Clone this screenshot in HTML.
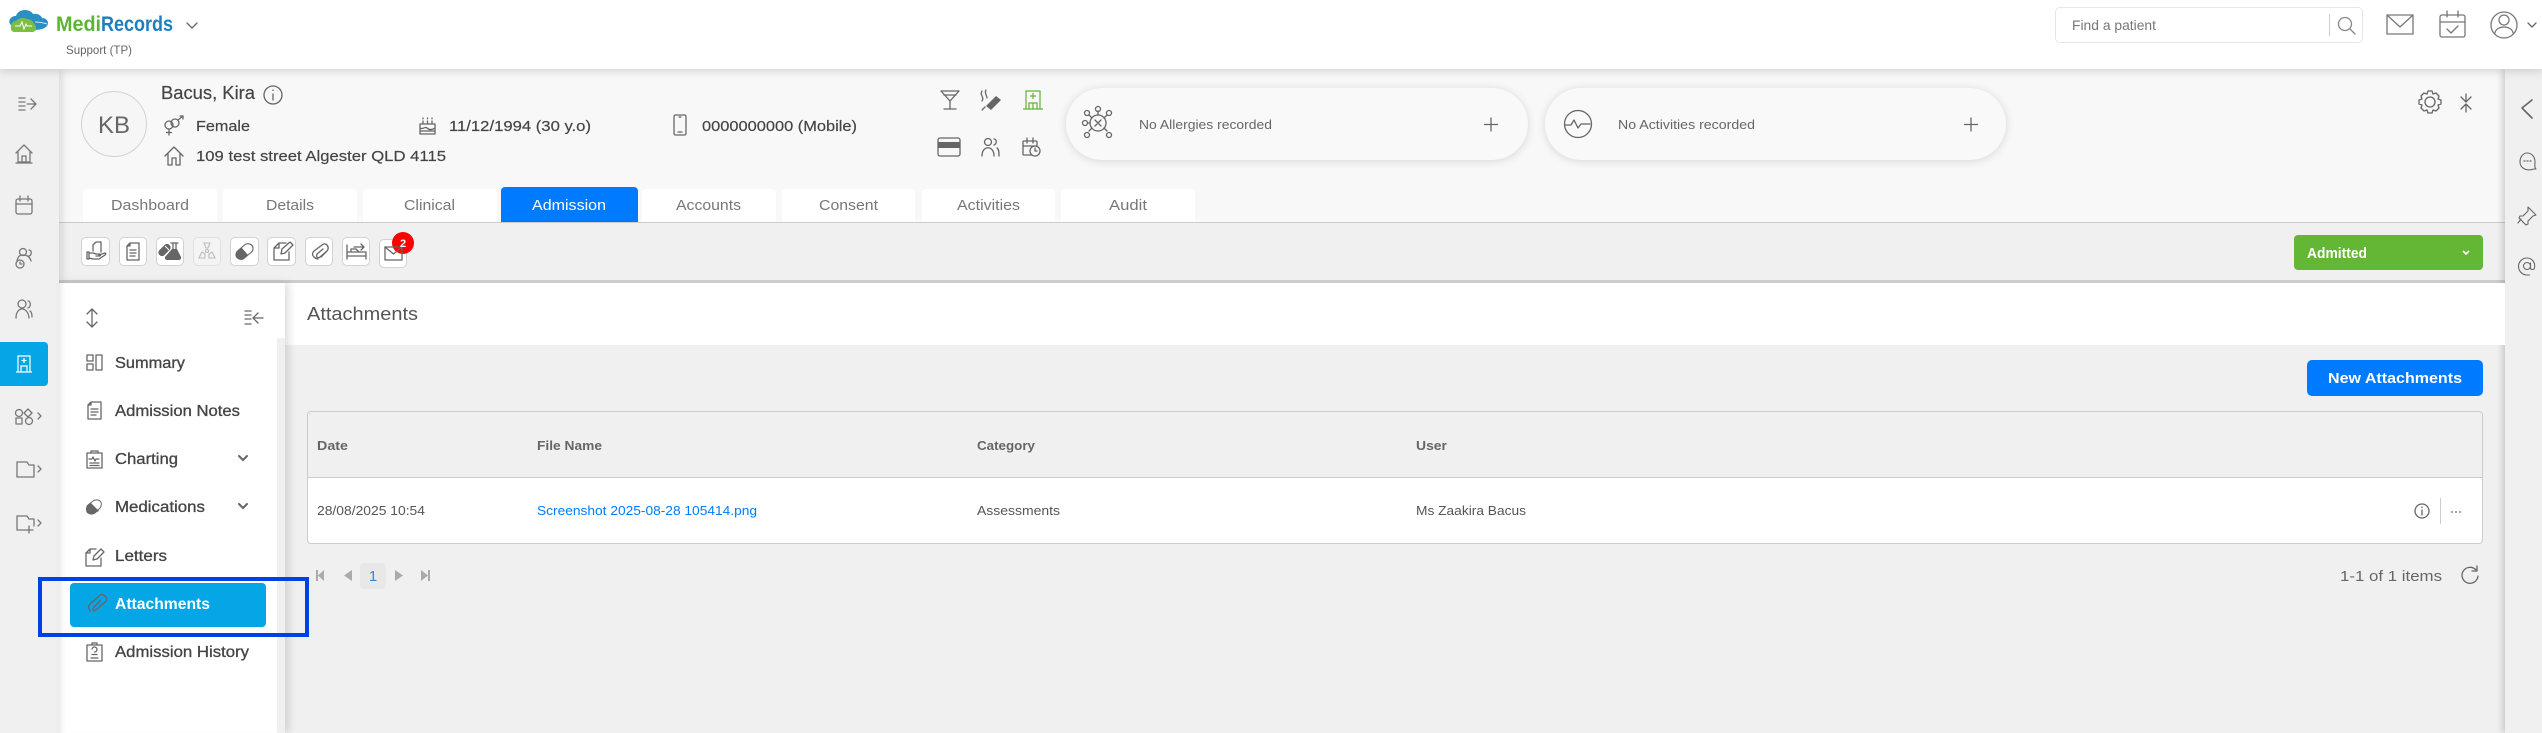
<!DOCTYPE html>
<html lang="en"><head><meta charset="utf-8"><title>MediRecords - Attachments</title>
<style>
html,body{margin:0;padding:0;background:#f0f0f0}
body{width:2542px;height:733px;position:relative;overflow:hidden;font-family:"Liberation Sans",sans-serif}
.b{position:absolute;box-sizing:border-box}
svg{position:absolute;left:0;top:0}
svg text{font-family:"Liberation Sans",sans-serif}
.i{fill:none;stroke:#666;stroke-width:1.3;stroke-linecap:round;stroke-linejoin:round}
.s{stroke:#444;stroke-width:.3px}
.t{stroke:#444;stroke-width:.18px}
</style></head><body>
<div class="b" style="left:59px;top:69px;width:2446px;height:154px;background:#f8f8f8"></div>
<div class="b" style="left:59px;top:222px;width:2446px;height:61px;background:#f0f0f0;border-top:1.5px solid #ccc;border-bottom:3px solid #ccc"></div>
<div class="b" style="left:0;top:69px;width:59px;height:664px;background:#f0f0f0;box-shadow:3px 0 8px rgba(0,0,0,.13)"></div>
<div class="b" style="left:2505px;top:69px;width:37px;height:664px;background:#f0f0f0;box-shadow:-3px 0 6px rgba(0,0,0,.16)"></div>
<div class="b" style="left:285px;top:283px;width:2220px;height:62px;background:#fff"></div>
<div class="b" style="left:59px;top:283px;width:226px;height:450px;background:#fff;box-shadow:4px 0 8px rgba(0,0,0,.13),inset 6px 0 6px -4px rgba(0,0,0,.10)"></div>
<div class="b" style="left:277px;top:338px;width:8px;height:395px;background:#f0f0f0"></div>
<div class="b" style="left:0;top:0;width:2542px;height:69px;background:#fff;box-shadow:0 2px 9px rgba(0,0,0,.16)"></div>
<div class="b" style="left:2055px;top:7px;width:308px;height:36px;background:#fff;border:1px solid #e6e6e6;border-radius:5px"></div>
<div class="b" style="left:81px;top:91px;width:66px;height:66px;border-radius:50%;background:#f6f6f6;border:1px solid #d2d2d2"></div>
<div class="b" style="left:83px;top:189px;width:134px;height:33px;background:#fff;border-radius:4px 4px 0 0"></div>
<div class="b" style="left:223px;top:189px;width:134px;height:33px;background:#fff;border-radius:4px 4px 0 0"></div>
<div class="b" style="left:363px;top:189px;width:134px;height:33px;background:#fff;border-radius:4px 4px 0 0"></div>
<div class="b" style="left:501px;top:187px;width:137px;height:35px;background:#007bff;border-radius:4px 4px 0 0"></div>
<div class="b" style="left:642px;top:189px;width:134px;height:33px;background:#fff;border-radius:4px 4px 0 0"></div>
<div class="b" style="left:782px;top:189px;width:133px;height:33px;background:#fff;border-radius:4px 4px 0 0"></div>
<div class="b" style="left:922px;top:189px;width:133px;height:33px;background:#fff;border-radius:4px 4px 0 0"></div>
<div class="b" style="left:1061px;top:189px;width:134px;height:33px;background:#fff;border-radius:4px 4px 0 0"></div>
<div class="b" style="left:1066px;top:88px;width:462px;height:72px;border-radius:36px;background:#f9f9f9;box-shadow:0 1px 9px rgba(0,0,0,.14)"></div>
<div class="b" style="left:1545px;top:88px;width:461px;height:72px;border-radius:36px;background:#f9f9f9;box-shadow:0 1px 9px rgba(0,0,0,.14)"></div>
<div class="b" style="left:81px;top:237px;width:29px;height:29px;background:#fff;border:1px solid #d2d2d2;border-radius:5px"></div>
<div class="b" style="left:119px;top:237px;width:28px;height:29px;background:#fff;border:1px solid #d2d2d2;border-radius:5px"></div>
<div class="b" style="left:156px;top:237px;width:28px;height:29px;background:#fff;border:1px solid #d2d2d2;border-radius:5px"></div>
<div class="b" style="left:193px;top:237px;width:28px;height:29px;background:#f4f4f4;border:1px solid #e0e0e0;border-radius:5px"></div>
<div class="b" style="left:230px;top:237px;width:29px;height:29px;background:#fff;border:1px solid #d2d2d2;border-radius:5px"></div>
<div class="b" style="left:267px;top:237px;width:29px;height:29px;background:#fff;border:1px solid #d2d2d2;border-radius:5px"></div>
<div class="b" style="left:305px;top:237px;width:28px;height:29px;background:#fff;border:1px solid #d2d2d2;border-radius:5px"></div>
<div class="b" style="left:342px;top:237px;width:28px;height:29px;background:#fff;border:1px solid #d2d2d2;border-radius:5px"></div>
<div class="b" style="left:379px;top:239px;width:28px;height:29px;background:#fff;border:1px solid #d2d2d2;border-radius:5px"></div>
<div class="b" style="left:392px;top:232px;width:22px;height:22px;background:#f00;border-radius:50%"></div>
<div class="b" style="left:2294px;top:235px;width:189px;height:35px;background:#64b635;border-radius:4px"></div>
<div class="b" style="left:0;top:342px;width:48px;height:44px;background:#05a6e6;border-radius:0 4px 4px 0"></div>
<div class="b" style="left:70px;top:583px;width:196px;height:44px;background:#05a6e6;border-radius:4px"></div>
<div class="b" style="left:2307px;top:360px;width:176px;height:36px;background:#007bff;border-radius:5px"></div>
<div class="b" style="left:307px;top:411px;width:2176px;height:133px;border:1px solid #ccc;border-radius:4px;background:linear-gradient(#f0f0f0 0,#f0f0f0 65px,#ccc 65px,#ccc 66px,#fff 66px)"></div>
<div class="b" style="left:360px;top:563px;width:26px;height:26px;background:#e8e8e8;border-radius:4px"></div>
<div class="b" style="left:38px;top:577px;width:271px;height:60px;border:4px solid #0041e6"></div>

<svg width="2542" height="733" viewBox="0 0 2542 733">
<!-- logo -->
<path d="M10 24c-2-4 1-8 6-8 1-4 5-6 9-6 4 0 7 2 8 4 4-1 8 1 9 4 4 0 6 3 6 5 0 3-3 5-6 6-4 1-7 1-10 1H16z" fill="#2a8fc4"/>
<path d="M35 22c5 0 9 1 12 2" fill="none" stroke="#fff" stroke-width=".8"/>
<path d="M11 29c-1-4 1-8 5-8 2-3 8-4 11-2 3 0 6 2 7 5 2 1 2 3 2 5 0 2-2 3-4 3H15c-2 0-4-1-4-3z" fill="#7cbd42"/>
<path d="M15 26h5l2-4 2 7 2-5 1 2h5" fill="none" stroke="#fff" stroke-width="1"/>
<text x="56" y="31" font-size="21" font-weight="bold" fill="#5cb531" textLength="45" lengthAdjust="spacingAndGlyphs">Medi</text>
<text x="101" y="31" font-size="21" font-weight="bold" fill="#1b7fc0" textLength="72" lengthAdjust="spacingAndGlyphs">Records</text>
<path class="i" d="M187 23l5 5 5-5" stroke-width="1"/>
<text x="66" y="54" font-size="12" fill="#666" textLength="66" lengthAdjust="spacingAndGlyphs">Support (TP)</text>

<!-- top right -->
<text x="2072" y="30" font-size="14" fill="#777" textLength="84" lengthAdjust="spacingAndGlyphs">Find a patient</text>
<path d="M2329.500 14v22" stroke="#ccc" fill="none"/>
<g class="i" stroke-width="1" style="stroke:#888"><circle cx="2345" cy="24" r="6.500"/><path d="M2350 29l5 5"/></g>
<g class="i" stroke-width="1.600" style="stroke:#777"><rect x="2387" y="15" width="26" height="19"/><path d="M2387 15l13 12 13-12"/></g>
<g class="i" stroke-width="1.500" style="stroke:#777"><rect x="2440" y="15" width="25" height="22" rx="2"/><path d="M2440 22h25M2447 11v6M2458 11v6M2447 29l4 4 7-7"/></g>
<g class="i" stroke-width="1.500" style="stroke:#777"><circle cx="2504" cy="25" r="13"/><circle cx="2504" cy="20" r="5"/><path d="M2495 33c1-8 17-8 18 0"/></g>
<path class="i" d="M2528 23l4 4 4-4"/>

<!-- left rail -->
<g class="i" stroke-width="1.100" style="stroke:#777">
<path stroke-dasharray="3 1" d="M19 98h6M19 102h6M19 106h6M19 110h6"/><path d="M27 104h8M31 99l5 5-5 5"/>
<path d="M16 153l8-8 8 8M18 152v10h12v-10M16 163h16M22 162v-6h4v6"/>
<rect x="16" y="199" width="16" height="15" rx="2"/><path d="M16 204h16M20 196v5M28 196v5"/>
<circle cx="23" cy="252" r="3.500"/><path d="M29 250c3 0 3 5 0 6M17 261c1-5 3-6 6-6 4 0 7 2 8 6"/><circle cx="20" cy="264" r="4"/><path d="M20 262v2h2"/>
<circle cx="22" cy="304" r="4"/><path d="M16 318c0-12 12-12 13 0M28 301c3 0 3 6 0 7M30 311c2 1 2 4 2 6"/>
<circle cx="19" cy="413" r="3.500"/><path d="M28 409l4 4-4 4-4-4z"/><rect x="16" y="418" width="6" height="6"/><circle cx="29" cy="421" r="3.500"/><path d="M38 413l3 3-3 3"/>
<path d="M17 462h10l2 3h5v12H17zM38 466l3 3-3 3"/>
<path d="M17 516h10l2 3h5v7M31 530H17v-14M29 526v7M25 530h8M38 520l3 3-3 3"/>
</g>
<g fill="none" stroke="#fff" stroke-width="1.200"><path d="M18 372v-16h12v16M16 372h16M24 358v5M21.500 360.500h5M21 372v-6h6v6"/></g>

<!-- patient header -->
<text x="98" y="133" font-size="24" fill="#666" textLength="32" lengthAdjust="spacingAndGlyphs">KB</text>
<text class="t" x="161" y="99" font-size="18" fill="#444" textLength="94" lengthAdjust="spacingAndGlyphs">Bacus, Kira</text>
<g class="i" stroke-width="1.100"><circle cx="273" cy="95" r="9"/><path d="M273 94v6M273 90v.5"/></g>
<g class="i" stroke-width="1.100"><circle cx="169" cy="125" r="4"/><circle cx="175" cy="123" r="4"/><path d="M169 129v6M166.500 132.500h5M178 120l5-4M180 116h3v3"/></g>
<text class="t" x="196" y="131" font-size="15" fill="#444" textLength="54" lengthAdjust="spacingAndGlyphs">Female</text>
<g class="i" stroke-width="1.100"><path d="M420 134v-10h15v10zM420 128c3 2 5-2 7 0s5 2 8 0M420 131h15M423 124v-3M427.500 124v-3M432 124v-3M423 118v.8M427.500 118v.8M432 118v.8"/></g>
<text class="t" x="449" y="131" font-size="15" fill="#444" textLength="142" lengthAdjust="spacingAndGlyphs">11/12/1994 (30 y.o)</text>
<g class="i" stroke-width="1.100"><rect x="674" y="115" width="12" height="20" rx="1.500"/><path d="M678 132h4M679 117h2"/></g>
<text class="t" x="702" y="131" font-size="15" fill="#444" textLength="155" lengthAdjust="spacingAndGlyphs">0000000000 (Mobile)</text>
<g class="i" stroke-width="1.100"><path d="M165 156l9-9 9 9M168 154v11h4v-7h4v7h4v-11"/></g>
<text class="t" x="196" y="161" font-size="15" fill="#444" textLength="250" lengthAdjust="spacingAndGlyphs">109 test street Algester QLD 4115</text>

<!-- status icons -->
<g class="i" stroke-width="1.300">
<path d="M941 91h18l-9 10zM950 101v8M944 109h12M944 95h12"/>
<path d="M982 91c-3 4 3 6 0 10M986 90c-2 3 1 5 1 8"/>
<path d="M982 110l3-3"/>
<rect x="938" y="138" width="22" height="18" rx="2"/>
<circle cx="988" cy="142" r="3.500"/><path d="M982 156c0-11 12-11 12 0M994 139c3 0 3 5 0 6M997 148c2 1 2 5 2 8"/>
<rect x="1023" y="141" width="14" height="14" rx="1"/><path d="M1023 146h12M1027 138v5M1033 138v5"/><circle cx="1035" cy="151" r="5" style="fill:#f8f8f8"/><path d="M1035 148v3h2"/>
</g>
<path d="M986 106l10-10 5 4-10 10z" fill="#666"/>
<rect x="938" y="142" width="22" height="6" fill="#666"/>
<g fill="none" stroke="#62b42f" stroke-width="1.200"><path d="M1026 109V91h14v18M1023 109h20M1033 93v6M1030 96h6M1029 109v-6h8v6M1033 103v6"/></g>

<!-- pills -->
<g class="i" stroke-width="1.400"><circle cx="1098" cy="123" r="8"/><path d="M1095 120l6 6M1101 120l-6 6M1098 115v-4M1092 118l-3-3M1104 118l3-3M1092 128l-3 3M1104 128l3 3M1090 123h-2"/><circle cx="1098" cy="109" r="2.500"/><circle cx="1087" cy="113" r="2.500"/><circle cx="1109" cy="113" r="2.500"/><circle cx="1085" cy="123" r="2.500"/><circle cx="1087" cy="135" r="2.500"/><circle cx="1109" cy="135" r="2.500"/></g>
<text x="1139" y="129" font-size="13" fill="#666" textLength="133" lengthAdjust="spacingAndGlyphs">No Allergies recorded</text>
<path class="i" d="M1491 118v13M1484.500 124.500h13" stroke-width="1"/>
<g class="i" stroke-width="1.600"><circle cx="1578" cy="124" r="13.500"/><path d="M1565 125h6l3-5 4 8 3-4h9"/></g>
<text x="1618" y="129" font-size="13" fill="#666" textLength="137" lengthAdjust="spacingAndGlyphs">No Activities recorded</text>
<path class="i" d="M1971 118v13M1964.500 124.500h13" stroke-width="1"/>

<!-- gear / collapse -->
<g class="i" stroke-width="1.100"><circle cx="2430" cy="102" r="5"/><path d="M2428 91h4l1 3 3-1 3 3-1 3 3 1v4l-3 1 1 3-3 3-3-1-1 3h-4l-1-3-3 1-3-3 1-3-3-1v-4l3-1-1-3 3-3 3 1z"/></g>
<g class="i" stroke-width="1.100"><path d="M2466 94v8M2461 97l5 5 5-5M2466 104v8M2461 109l5-5 5 5"/></g>

<!-- right rail -->
<g class="i"><path d="M2532 100l-10 8 10 10" stroke-width="1.600"/>
<path d="M2534 169c-9 3-14-2-14-7 0-6 4-9 7-9 5 0 8 4 8 9 0 3-1 5 1 7z" stroke-width="1.100"/><path d="M2524 161h1M2527 161h1M2530 161h1"/>
<path d="M2528 207l8 8-3 1-5 5v3l-2 1-7-7 1-2h3l5-5z" stroke-width="1.100"/><path d="M2521 219l-3 4" stroke-width="1.100"/>
<circle cx="2527" cy="266" r="3.500" stroke-width="1.100"/><path d="M2530.500 263v5c0 2 3.500 2 4 0 1-5-2-10-7.500-10-5 0-8.500 4-8.500 8.500s4 8.500 8 8.500h3" stroke-width="1.100"/></g>

<!-- tabs -->
<g font-size="15" fill="#777">
<text x="111" y="210" textLength="78" lengthAdjust="spacingAndGlyphs">Dashboard</text>
<text x="266" y="210" textLength="48" lengthAdjust="spacingAndGlyphs">Details</text>
<text x="404" y="210" textLength="51" lengthAdjust="spacingAndGlyphs">Clinical</text>
<text x="532" y="210" fill="#fff" textLength="74" lengthAdjust="spacingAndGlyphs">Admission</text>
<text x="676" y="210" textLength="65" lengthAdjust="spacingAndGlyphs">Accounts</text>
<text x="819" y="210" textLength="59" lengthAdjust="spacingAndGlyphs">Consent</text>
<text x="957" y="210" textLength="63" lengthAdjust="spacingAndGlyphs">Activities</text>
<text x="1109" y="210" textLength="38" lengthAdjust="spacingAndGlyphs">Audit</text>
</g>

<!-- toolbar icons -->
<g class="i" stroke-width="1">
<path d="M93 251v-6l3-3h5v10"/>
<path d="M87 252h2v7h-2zM89 253h4l3 1h3c2 0 2 2 0 2h-3M99 255l6-2c1 0 1 1 0 2l-6 4h-6l-4-1"/>
<path d="M130 243h9v17h-12v-14zM130 243v3h-3M130 250h6M130 253h6M130 256h5"/>
<path d="M171 243h7M173 243v6M176 243v6"/>
</g>
<path d="M172 249h5l4 8c.5 1.500-.5 3-2 3h-12c-1.500 0-2.500-1.500-2-3z" fill="#666"/>
<path d="M159.500 250l5-5c1.500-1.500 3.500-1.500 5 0s1.500 3.500 0 5l-5 5c-1.500 1.500-3.500 1.500-5 0s-1.500-3.500 0-5z" fill="#666"/>
<path d="M165 246l4 4" stroke="#fff" fill="none"/>
<g fill="none" stroke="#bbb" stroke-width="1.100"><circle cx="207" cy="251" r="1.600"/><path d="M204 243h6l-2 5h-2zM199 258l3-6 3 2 0 4zM215 258l-3-6-3 2 0 4z"/></g>
<path d="M237.500 251l7-6c2-2 5-1.500 7 0s2 5 0 7l-7 6c-2 2-5 1.500-7 0s-2-5 0-7z" fill="#fff" stroke="#666" stroke-width="1.100"/>
<path d="M237.500 251l4-3.500 6.500 7.500-4 3.500c-2 2-4.500 1.500-6.500 0s-2-5 0-7z" fill="#666"/>
<g class="i" stroke-width="1.200">
<path d="M286 243h-7l-5 5v12h15v-8M274 248h5v-5M281 254l1-5 8-7 3 3-8 8z"/>
<path d="M318 259c-2 0-3-1-4-2-2-2-2-4 0-6l8-6c2-2 4-1 5 0s2 4 0 6l-7 6c-1 1-3 1-3 0-1-1 0-2 0-3l6-5M327 251l-6 6"/>
<path d="M347 245v14M366 259v-7h-19M351 252v-3h5l3 3M354 247h10M361 244l3 3-3 3M347 256h19"/>
<rect x="385" y="247" width="17" height="13"/><path d="M385 247l8.500 7 8.500-7"/>
</g>
<text x="403" y="247" font-size="11" font-weight="bold" fill="#fff" text-anchor="middle">2</text>

<!-- admitted -->
<text x="2307" y="258" font-size="15" font-weight="bold" fill="#fff" textLength="60" lengthAdjust="spacingAndGlyphs">Admitted</text>
<path d="M2463 251l3 3 3-3" fill="none" stroke="#fff" stroke-width="1.600"/>

<!-- title -->
<text x="307" y="320" font-size="18" fill="#555" textLength="111" lengthAdjust="spacingAndGlyphs">Attachments</text>

<!-- nav -->
<g class="i" stroke-width="1.100">
<path d="M92 310v16M87 314l5-5 5 5M87 322l5 5 5-5"/>
<path stroke-dasharray="3 1" d="M245 311h6M245 315h6M245 319h6M245 324h6"/><path d="M263 318h-9M258 313l-5 5 5 5"/>
<rect x="87" y="355" width="6" height="6"/><rect x="87" y="364" width="6" height="6"/><rect x="96" y="355" width="6" height="15"/>
<path d="M91 402h10v17H88v-14zM91 402v3h-3M91 409h7M91 412h7M91 415h5"/>
<rect x="87" y="453" width="15" height="15"/><path d="M91 453v-2h7v2M89 459h3l1-2 2 4 1-2h3M90 463h9M90 465.500h9"/>
<path d="M239 456l4 4 4-4" stroke-width="2"/>
<path d="M239 504l4 4 4-4" stroke-width="2"/>
<path d="M96 549h-6l-4 4v13h15v-8M86 553h4v-4M93 560l1-4 7-7 3 3-7 7z"/>
<path d="M87 645h15v16H87zM92 645v-2h5v2M91 658h7M92 649a2.500 2.500 0 1 1 2.500 3M92 654.500h5"/>
</g>
<path d="M88 505l5-4c2-1.500 5-1.500 7 0s1.500 5 0 7l-5 5c-2 1.500-5 1.500-7 0s-2-6 0-8z" fill="#fff" stroke="#666"/>
<path d="M88 505l3-2 8 8-4 2c-2 1.500-5 1.500-7 0s-2-6 0-8z" fill="#666"/>
<path d="M91 612l-2-3c-1-2 0-4 1-5l9-8c2-2 4-2 6 0s2 4 0 6l-9 8c-1 1-3 1-3-1l1-2 7-7" fill="none" stroke="#666" stroke-width="1.300"/>
<g font-size="15.500" fill="#444">
<text class="s" x="115" y="368" textLength="70" lengthAdjust="spacingAndGlyphs">Summary</text>
<text class="s" x="115" y="416" textLength="125" lengthAdjust="spacingAndGlyphs">Admission Notes</text>
<text class="s" x="115" y="464" textLength="63" lengthAdjust="spacingAndGlyphs">Charting</text>
<text class="s" x="115" y="512" textLength="90" lengthAdjust="spacingAndGlyphs">Medications</text>
<text class="s" x="115" y="561" textLength="52" lengthAdjust="spacingAndGlyphs">Letters</text>
<text x="115" y="609" fill="#fff" font-weight="bold" textLength="95" lengthAdjust="spacingAndGlyphs">Attachments</text>
<text class="s" x="115" y="657" textLength="134" lengthAdjust="spacingAndGlyphs">Admission History</text>
</g>

<!-- new attachments -->
<text x="2328" y="383" font-size="15" font-weight="bold" fill="#fff" textLength="134" lengthAdjust="spacingAndGlyphs">New Attachments</text>

<!-- table -->
<g font-size="13" font-weight="bold" fill="#666">
<text x="317" y="450" textLength="31" lengthAdjust="spacingAndGlyphs">Date</text>
<text x="537" y="450" textLength="65" lengthAdjust="spacingAndGlyphs">File Name</text>
<text x="977" y="450" textLength="58" lengthAdjust="spacingAndGlyphs">Category</text>
<text x="1416" y="450" textLength="31" lengthAdjust="spacingAndGlyphs">User</text>
</g>
<g font-size="13" fill="#555">
<text x="317" y="515" textLength="108" lengthAdjust="spacingAndGlyphs">28/08/2025 10:54</text>
<text x="537" y="515" fill="#007bff" textLength="220" lengthAdjust="spacingAndGlyphs">Screenshot 2025-08-28 105414.png</text>
<text x="977" y="515" textLength="83" lengthAdjust="spacingAndGlyphs">Assessments</text>
<text x="1416" y="515" textLength="110" lengthAdjust="spacingAndGlyphs">Ms Zaakira Bacus</text>
</g>
<g class="i" stroke-width="1"><circle cx="2422" cy="511" r="7"/><path d="M2422 510v5M2422 507v.5"/></g>
<path d="M2440.500 498v26" stroke="#ccc" fill="none"/>
<g fill="#666"><circle cx="2452" cy="512" r=".9"/><circle cx="2456" cy="512" r=".9"/><circle cx="2460" cy="512" r=".9"/></g>

<!-- pagination -->
<g fill="#aaa"><path d="M316 570h2v11h-2zM324 570v11l-6-5.500zM352 570v11l-8-5.500zM395 570v11l8-5.500zM421 570v11l7-5.500zM428 570h2v11h-2z"/></g>
<text x="373" y="581" font-size="15" fill="#2b88ee" text-anchor="middle">1</text>
<text x="2340" y="581" font-size="15" fill="#666" textLength="102" lengthAdjust="spacingAndGlyphs">1-1 of 1 items</text>
<g class="i" stroke-width="1.100"><path d="M2476 570a8 8 0 1 0 2 6M2477 566v5h-5"/></g>
</svg>
</body></html>
